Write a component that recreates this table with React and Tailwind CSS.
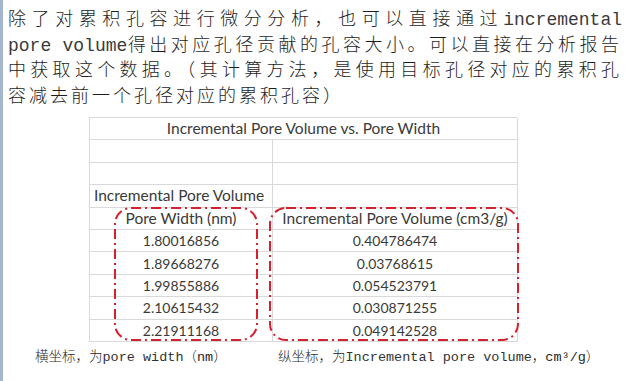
const L = ({ children }) => <span className="tracking-normal text-[#3a3a3a]">{children}</span>;

const lines = [
  <>除了对累积孔容进行微分分析，也可以直接通过<L>incremental</L></>,
  <><L>pore volume</L>得出对应孔径贡献的孔容大小。可以直接在分析报告</>,
  <>中获取这个数据。（其计算方法，是使用目标孔径对应的累积孔</>,
];

const rows = [
  ['1.80016856', '0.404786474'],
  ['1.89668276', '0.03768615'],
  ['1.99855886', '0.054523791'],
  ['2.10615432', '0.030871255'],
  ['2.21911168', '0.049142528'],
];

const Cell = ({ children, className = '' }) => (
  <div className={`h-[22.4px] border-b border-r border-[#d9d9d9] flex items-center ${className}`}>
    {children}
  </div>
);

const App = () => {
  return (
    <div className="relative w-[625px] h-[381px] bg-white overflow-hidden">
      <div className="absolute left-0 top-0 h-full w-[3px] bg-[#a3b6cc]" />

      <div className="pt-2 pl-2 w-[622px] text-[18px] leading-[25.5px] tracking-[3px] text-[#1e1e1e] font-light font-['Liberation_Mono','Noto_Sans_CJK_SC',monospace]">
        {lines.map((l, i) => (
          <div key={i} className="whitespace-nowrap text-justify [text-align-last:justify]">
            {l}
          </div>
        ))}
        <div className="whitespace-nowrap">容减去前一个孔径对应的累积孔容）</div>
      </div>

      <div className="relative ml-[89px] mt-[7px] w-[428px] font-['Lato',sans-serif] text-[15.5px] text-[#3a3a3a]">
        <div className="grid grid-cols-[183px_245px] border-t border-l border-[#d9d9d9]">
          <Cell className="col-span-2 justify-center">Incremental Pore Volume vs. Pore Width</Cell>
          <Cell />
          <Cell />
          <Cell />
          <Cell />
          <Cell className="pl-1 whitespace-nowrap">Incremental Pore Volume</Cell>
          <Cell />
          <Cell className="justify-center">Pore Width (nm)</Cell>
          <Cell className="justify-center whitespace-nowrap">Incremental Pore Volume (cm3/g)</Cell>
          {rows.map(([a, b]) => (
            <div key={a} className="contents">
              <Cell className="justify-center text-[14px]">{a}</Cell>
              <Cell className="justify-center text-[14px]">{b}</Cell>
            </div>
          ))}
        </div>
        <svg className="absolute left-0 top-0 overflow-visible" width="428" height="224">
          <g fill="none" stroke="#d4202f" strokeWidth="2" strokeDasharray="10 4 2 4">
            <rect x="26" y="91" width="142" height="132" rx="16" />
            <rect x="181" y="91" width="248" height="132" rx="16" />
          </g>
        </svg>
      </div>

      <div className="flex mt-[6px] text-[13.5px] leading-[20px] text-[#1e1e1e] font-light font-['Liberation_Mono','Noto_Sans_CJK_SC',monospace] whitespace-nowrap">
        <div className="ml-[35px] w-[243px]">横坐标，为<span className="text-[#333]">pore width</span>（nm）</div>
        <div>纵坐标，为<span className="text-[#333]">Incremental pore volume</span>，cm³/g）</div>
      </div>
    </div>
  );
};

export default App;
